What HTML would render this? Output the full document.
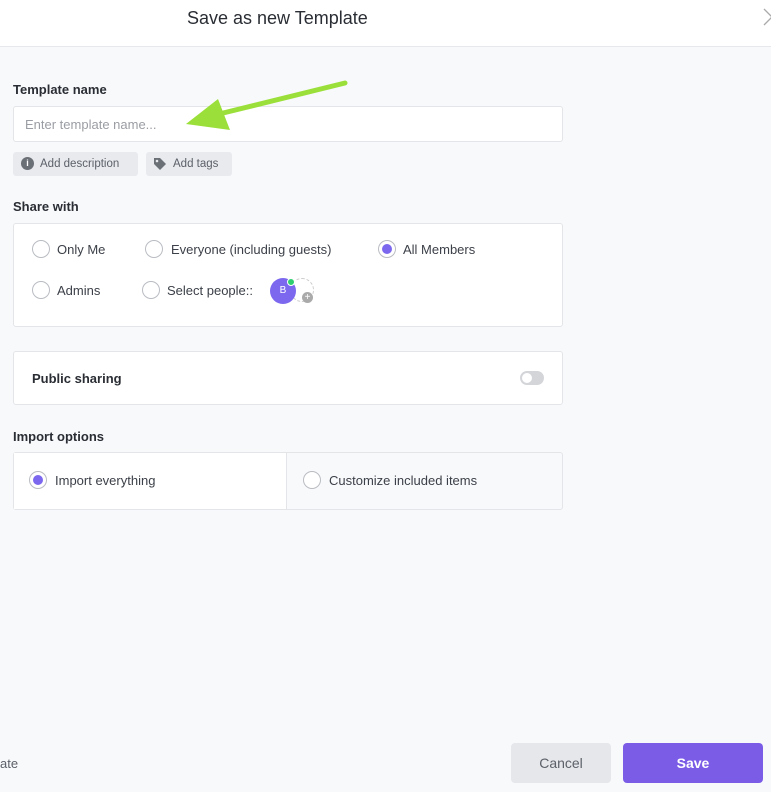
<!DOCTYPE html>
<html><head><style>
*{box-sizing:border-box;margin:0;padding:0}
body{width:771px;height:792px;background:#f8f9fb;font-family:"Liberation Sans",sans-serif;color:#2a2e34;position:relative;overflow:hidden}
.hdr{position:absolute;left:0;top:0;width:771px;height:47px;background:#fff;border-bottom:1px solid #e6e8ec}
.title{position:absolute;left:187px;top:8px;font-size:18px;color:#2a2e34}
.abs{position:absolute}
.lbl{font-size:13px;font-weight:bold;color:#2a2e34}
.box{position:absolute;background:#fff;border:1px solid #e3e5e9;border-radius:3px}
.r{position:absolute;width:18px;height:18px;border:1px solid #b9bcc2;border-radius:50%;background:#fff}
.r.on::after{content:"";position:absolute;left:3px;top:3px;width:10px;height:10px;border-radius:50%;background:#7b68ee}
.t{position:absolute;font-size:13px;color:#3c4048}
.chip{position:absolute;top:152px;height:24px;background:#e8eaee;border-radius:3px;font-size:11.5px;color:#5c6068;line-height:24px}
</style></head><body>
<div class="hdr"><div class="title">Save as new Template</div>
<svg class="abs" style="left:763px;top:8px" width="10" height="18"><path d="M1 1L9 9L1 17" stroke="#aaa" stroke-width="1.3" fill="none"/></svg></div>
<div class="abs lbl" style="left:13px;top:82px">Template name</div>
<div class="box" style="left:13px;top:106px;width:550px;height:36px"></div>
<div class="abs" style="left:25px;top:117px;font-size:13px;color:#9a9da3">Enter template name...</div>
<div class="chip" style="left:13px;width:125px"><span style="position:absolute;left:8px;top:5px;width:13px;height:13px;border-radius:50%;background:#6b6f76;color:#fff;font-size:9px;line-height:13px;text-align:center;font-weight:bold">i</span><span style="margin-left:27px">Add description</span></div>
<div class="chip" style="left:146px;width:86px"><svg class="abs" style="left:7px;top:5px" width="14" height="14" viewBox="0 0 14 14"><path d="M1 1h6l6 6-6 6-6-6z" fill="#6b6f76"/><circle cx="4" cy="4" r="1.3" fill="#e8eaee"/></svg><span style="margin-left:27px">Add tags</span></div>
<div class="abs lbl" style="left:13px;top:199px">Share with</div>
<div class="box" style="left:13px;top:223px;width:550px;height:104px"></div>
<div class="r" style="left:32px;top:240px"></div><div class="t" style="left:57px;top:242px">Only Me</div>
<div class="r" style="left:145px;top:240px"></div><div class="t" style="left:171px;top:242px">Everyone (including guests)</div>
<div class="r on" style="left:378px;top:240px"></div><div class="t" style="left:403px;top:242px">All Members</div>
<div class="r" style="left:32px;top:281px"></div><div class="t" style="left:57px;top:283px">Admins</div>
<div class="r" style="left:142px;top:281px"></div><div class="t" style="left:167px;top:283px">Select people::</div>
<div class="abs" style="left:290px;top:278px;width:24px;height:24px;border:1px dashed #ccc;border-radius:50%"></div>
<div class="abs" style="left:270px;top:278px;width:26px;height:26px;border-radius:50%;background:#7b68ee;color:#fff;font-size:10px;text-align:center;line-height:26px">B</div>
<div class="abs" style="left:287px;top:278px;width:8px;height:8px;border-radius:50%;background:#2ecd6f;border:1px solid #fff"></div>
<div class="abs" style="left:302px;top:292px;width:11px;height:11px;border-radius:50%;background:#aaa;color:#fff;font-size:10px;line-height:11px;text-align:center">+</div>
<div class="box" style="left:13px;top:351px;width:550px;height:54px"></div>
<div class="abs lbl" style="left:32px;top:371px">Public sharing</div>
<div class="abs" style="left:520px;top:371px;width:24px;height:14px;border-radius:7px;background:#d3d5d9"><div style="position:absolute;left:2px;top:2px;width:10px;height:10px;border-radius:50%;background:#fff"></div></div>
<div class="abs lbl" style="left:13px;top:429px">Import options</div>
<div class="box" style="left:13px;top:452px;width:550px;height:58px;background:#f8f9fb"></div>
<div class="abs" style="left:14px;top:453px;width:273px;height:56px;background:#fff;border-right:1px solid #e3e5e9"></div>
<div class="r on" style="left:29px;top:471px"></div><div class="t" style="left:55px;top:473px">Import everything</div>
<div class="r" style="left:303px;top:471px"></div><div class="t" style="left:329px;top:473px">Customize included items</div>
<div class="abs" style="left:0;top:756px;font-size:13px;color:#5c6068">ate</div>
<div class="abs" style="left:511px;top:743px;width:100px;height:40px;background:#e6e7eb;border-radius:4px;color:#5c6068;font-size:14px;text-align:center;line-height:40px">Cancel</div>
<div class="abs" style="left:623px;top:743px;width:140px;height:40px;background:#7b5ce6;border-radius:4px;color:#fff;font-size:14px;font-weight:bold;text-align:center;line-height:40px">Save</div>
<svg class="abs" style="left:0;top:0" width="771" height="792"><path d="M345 83L215 115" stroke="#9be03a" stroke-width="5" stroke-linecap="round"/><path d="M186 124L218 99L230 130Z" fill="#9be03a"/></svg>
</body></html>
